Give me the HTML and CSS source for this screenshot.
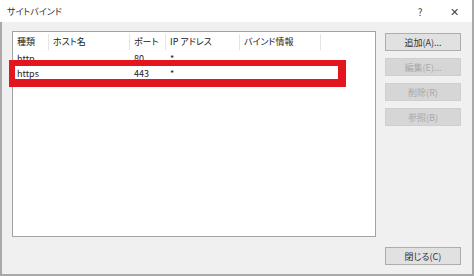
FILE: index.html
```html
<!DOCTYPE html>
<html lang="ja">

<head>
  <meta charset="UTF-8">
  <title>サイトバインド</title>
  <link rel="stylesheet" href="styles.css">
</head>

<body>

  <div class="win">
    <div class="titlebar">
      <span class="title">サイトバインド</span>
      <span class="help">?</span>
      <span class="close">✕</span>
    </div>

    <div class="main">
      <div class="top">
        <div class="list">
          <ul class="head">
            <li class="c1">種類</li>
            <li class="c2">ホスト名</li>
            <li class="c3">ポート</li>
            <li class="c4">IP アドレス</li>
            <li class="c5">バインド情報</li>
            <li class="c6"></li>
          </ul>
          <ul class="row">
            <li class="c1">http</li>
            <li class="c2"></li>
            <li class="c3">80</li>
            <li class="c4">*</li>
            <li class="c5"></li>
          </ul>
          <ul class="row">
            <li class="c1">https</li>
            <li class="c2"></li>
            <li class="c3">443</li>
            <li class="c4">*</li>
            <li class="c5"></li>
          </ul>
          <div class="mark"></div>
        </div>

        <div class="btns">
          <span class="btn">追加(A)...</span>
          <span class="btn off">編集(E)...</span>
          <span class="btn off">削除(R)</span>
          <span class="btn off">参照(B)</span>
        </div>
      </div>

      <div class="bottom">
        <span class="btn">閉じる(C)</span>
      </div>
    </div>
  </div>

</body>

</html>
```

FILE: styles.css
```css
* {
  margin: 0;
  padding: 0;
  list-style: none;
  box-sizing: border-box;
}

html,
body {
  width: 100%;
  height: 100%;
}

body {
  font-family: "Noto Sans CJK JP", "Noto Sans", sans-serif;
  font-size: 9px;
  font-feature-settings: "palt";
  color: #222;
  background: #fff;
}

.win {
  width: 474px;
  height: 276px;
  display: flex;
  flex-direction: column;
  border-right: 2px solid #a9a9a9;
}

.titlebar {
  height: 22px;
  display: flex;
  align-items: center;
  background: #fff;
  padding-left: 7px;
}

.title {
  flex: 1;
  font-size: 9px;
  color: #333;
}

.help {
  width: 34px;
  text-align: center;
  font-size: 10px;
  color: #444;
}

.close {
  width: 34px;
  text-align: center;
  font-size: 11px;
  color: #444;
  margin-right: 1px;
}

.main {
  flex: 1;
  background: #f0f0f0;
  border-left: 2px solid #a9a9a9;
  border-bottom: 2px solid #a9a9a9;
  display: flex;
  flex-direction: column;
  padding: 9px 0 0 10px;
}

.top {
  display: flex;
}

.list {
  position: relative;
  width: 364px;
  height: 206px;
  background: #fff;
  border: 1px solid #a3a3a3;
}

.head,
.row {
  display: flex;
}

.head {
  height: 19px;
  align-items: center;
}

.head li {
  height: 16px;
  line-height: 16px;
  border-right: 1px solid #e5e5e5;
  padding-left: 4px;
}

.row {
  height: 15px;
  line-height: 15px;
}

.row li {
  padding-left: 4px;
}

.c1 { width: 36px; }
.c2 { width: 81px; }
.c3 { width: 36px; }
.c4 { width: 74px; }
.c5 { width: 81px; }
.c6 { width: 0; }

.head .c6 {
  border: none;
}

.mark {
  position: absolute;
  left: -4px;
  top: 28px;
  width: 337px;
  height: 27px;
  border-style: solid;
  border-color: #e3161f;
  border-width: 6px 8px 8px 6px;
}

.btns {
  margin-left: 9px;
  display: flex;
  flex-direction: column;
  gap: 7px;
  padding-top: 2px;
}

.btn {
  width: 76px;
  height: 18px;
  display: flex;
  align-items: center;
  justify-content: center;
  background: #e1e1e1;
  border: 1px solid #adadad;
  color: #333;
}

.btn.off {
  background: #d6d6d6;
  border-color: #cfcfcf;
  color: #a8a8a8;
}

.bottom {
  display: flex;
  justify-content: flex-end;
  padding: 10px 11px 0 0;
}
```
